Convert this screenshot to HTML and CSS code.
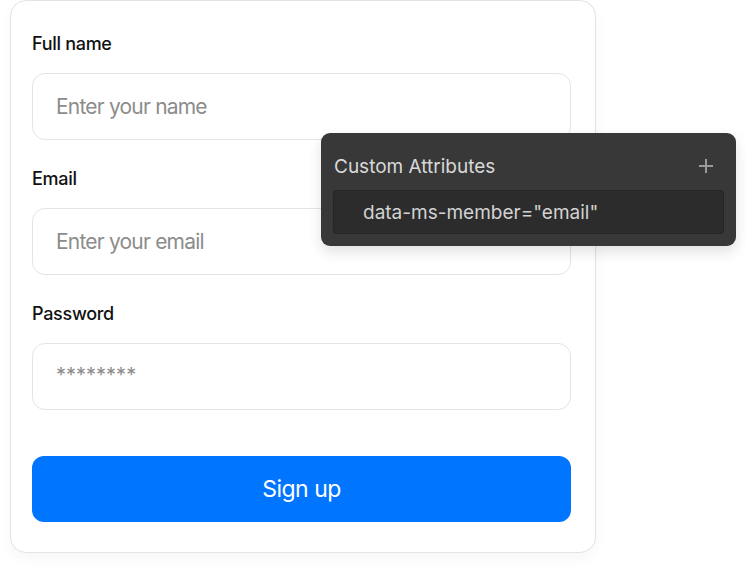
FILE: index.html
```html
<!DOCTYPE html>
<html lang="en">
<head>
<meta charset="utf-8">
<title>Sign up</title>
<link rel="stylesheet" href="styles.css">
</head>
<body>
<div class="stage">
  <form class="card">
    <div class="field">
      <label class="label">Full name</label>
      <div class="input placeholder">Enter your name</div>
    </div>
    <div class="field">
      <label class="label">Email</label>
      <div class="input placeholder">Enter your email</div>
    </div>
    <div class="field">
      <label class="label">Password</label>
      <div class="input placeholder stars">********</div>
    </div>
    <button type="button" class="btn">Sign up</button>
  </form>

  <div class="attrs">
    <div class="attrs-head">
      <span class="attrs-title">Custom Attributes</span>
      <svg class="plus" width="14" height="14" viewBox="0 0 14 14" aria-hidden="true">
        <path d="M7 0v14M0 7h14" stroke="#9a9a9a" stroke-width="2" fill="none"/>
      </svg>
    </div>
    <div class="attr-row">data-ms-member="email"</div>
  </div>
</div>
</body>
</html>
```
FILE: styles.css
```css
html, body {
  margin: 0;
  padding: 0;
  background: #ffffff;
}
body {
  font-family: Inter, "Noto Sans", "Liberation Sans", sans-serif;
  width: 746px;
  height: 574px;
  overflow: hidden;
}
.stage {
  position: relative;
  width: 746px;
  height: 574px;
}
.card {
  margin: 0 0 0 10px;
  width: 586px;
  box-sizing: border-box;
  border: 1px solid #e3e3e3;
  border-radius: 16px;
  padding: 32px 24px 30px 21px;
  background: #fff;
  box-shadow: 0 6px 14px rgba(0, 0, 0, 0.035);
  display: flex;
  flex-direction: column;
}
.field {
  display: flex;
  flex-direction: column;
  margin-bottom: 28px;
}
.label {
  font-size: 18px;
  line-height: 22px;
  font-weight: 500;
  color: #111;
  letter-spacing: -0.3px;
  margin-bottom: 18px;
}
.input {
  height: 67px;
  box-sizing: border-box;
  border: 1px solid #e4e4e4;
  border-radius: 13px;
  padding: 0 23px;
  display: flex;
  align-items: center;
  font-size: 21px;
  letter-spacing: -0.8px;
  color: #8c8c8c;
}
.stars {
  letter-spacing: 0;
  font-size: 20px;
  padding-bottom: 4px;
}
.btn {
  margin-top: 18px;
  height: 66px;
  border: none;
  border-radius: 12px;
  background: #0075ff;
  color: #fff;
  font-family: inherit;
  font-size: 23px;
  letter-spacing: -0.5px;
  font-weight: 400;
  padding: 0;
}
.attrs {
  position: absolute;
  left: 321px;
  top: 133px;
  width: 415px;
  height: 113px;
  box-sizing: border-box;
  background: #383838;
  border-radius: 9px;
  padding: 21px 12px 12px;
  box-shadow: 0 6px 14px rgba(0, 0, 0, 0.12);
}
.attrs-head {
  display: flex;
  justify-content: space-between;
  align-items: center;
  height: 24px;
  padding: 0 0 0 1px;
}
.attrs-title {
  font-size: 19px;
  color: #d8d8d8;
}
.plus {
  margin-right: 11px;
}
.attr-row {
  margin-top: 12px;
  height: 44px;
  box-sizing: border-box;
  background: #2c2c2c;
  border: 1px solid #262626;
  border-radius: 3px;
  padding: 0 29px;
  display: flex;
  align-items: center;
  font-size: 19px;
  color: #d2d2d2;
}
```
